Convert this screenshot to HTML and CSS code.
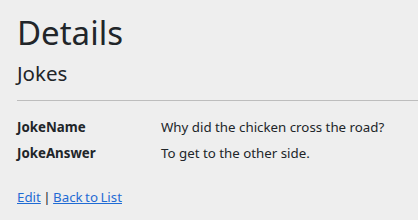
FILE: index.html
```html
<!DOCTYPE html>
<html lang="en">
<head>
    <meta charset="UTF-8">
    <meta name="viewport" content="width=device-width, initial-scale=1.0">
    <title>Details - Jokes</title>
    <link rel="stylesheet" href="styles.css">
</head>
<body>
    <div class="container">
        <h1>Details</h1>

        <div>
            <h4>Jokes</h4>
            <hr>
            <dl class="row">
                <dt>JokeName</dt>
                <dd>Why did the chicken cross the road?</dd>
                <dt>JokeAnswer</dt>
                <dd>To get to the other side.</dd>
            </dl>
        </div>
        <div class="actions">
            <a href="#">Edit</a> |
            <a href="#">Back to List</a>
        </div>
    </div>
</body>
</html>
```

FILE: styles.css
```css
* {
    margin: 0;
    padding: 0;
    box-sizing: border-box;
}

body {
    font-family: "Noto Sans", "Open Sans", sans-serif;
    font-size: 13.3px;
    line-height: 22px;
    color: #212529;
    background: #eeeeee;
}

.container {
    padding: 13px 0 0 17px;
}

h1 {
    font-size: 33px;
    font-weight: 400;
    line-height: 40px;
    margin-bottom: 8px;
}

h4 {
    font-size: 20.5px;
    font-weight: 400;
    line-height: 25px;
}

hr {
    border: 0;
    border-top: 1px solid #bdbdbd;
    margin: 14px 0 15px;
}

.row {
    display: grid;
    grid-template-columns: 144px 1fr;
    row-gap: 4px;
    margin-bottom: 23px;
}

dt {
    font-weight: 700;
}

.actions {
    line-height: 20px;
    word-spacing: -1px;
}

.actions a {
    color: #1f6bd4;
    text-decoration: underline;
}
```
